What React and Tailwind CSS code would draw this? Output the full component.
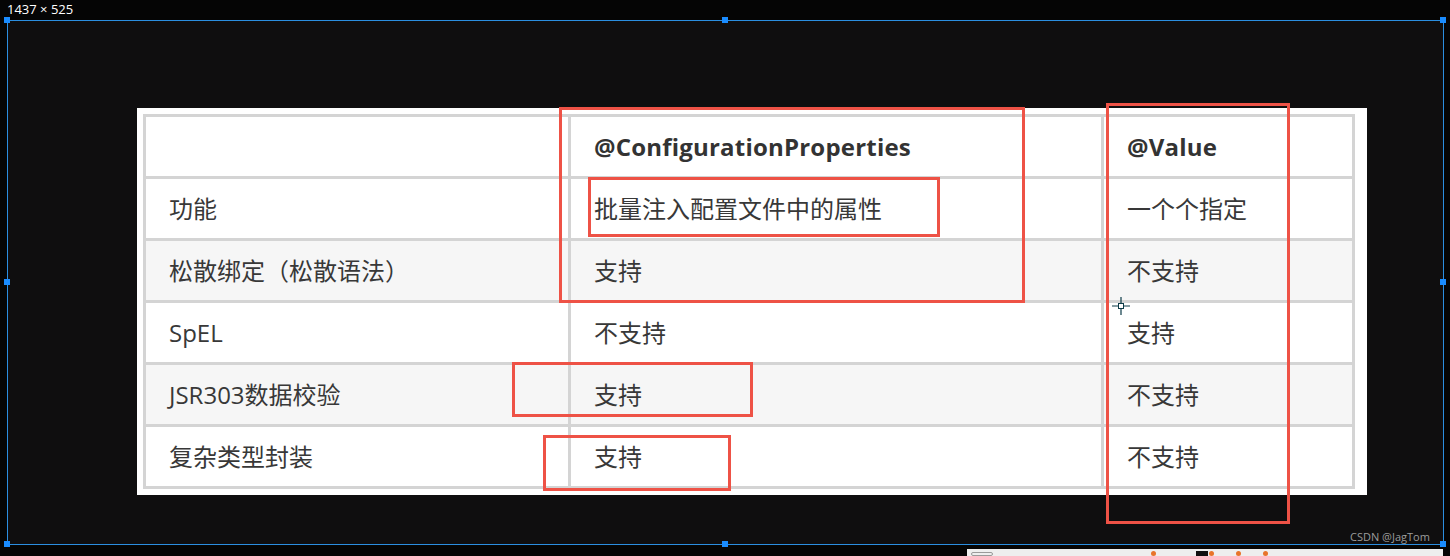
import React from "react";

const rows = [
  ["功能", "批量注入配置文件中的属性", "一个个指定", false],
  ["松散绑定（松散语法）", "支持", "不支持", true],
  ["SpEL", "不支持", "支持", false],
  ["JSR303数据校验", "支持", "不支持", true],
  ["复杂类型封装", "支持", "不支持", false],
];

function Cell({ children, bold, shade }) {
  return (
    <div
      className={`flex items-center pl-[23px] h-[59px] text-[24px] ${
        bold ? "font-bold text-[#333333] tracking-[0.2px]" : "font-normal text-[#383838]"
      } ${shade ? "bg-[#f6f6f6]" : "bg-white"}`}
    >
      {children}
    </div>
  );
}

function Handle({ cls }) {
  return <div className={`absolute w-[6px] h-[6px] bg-[#1a8cff] ${cls}`} />;
}

export default function App() {
  return (
    <div
      className="relative w-[1450px] h-[556px] bg-[#050505] overflow-hidden"
      style={{ fontFamily: '"Open Sans", "Noto Sans CJK SC", sans-serif' }}
    >
      <div className="h-[20px] pl-[7px] pt-[1px] text-[13px] leading-[16px] text-white">
        1437 × 525
      </div>
      <div className="ml-[7px] w-[1437px] h-[525px] border border-[#2b8ee0] bg-[#0f0e0f] pt-[87px] pl-[129px]">
        <div className="w-[1230px] h-[387px] bg-white pt-[6px] pl-[6px]">
          <div className="grid grid-cols-[422px_530px_248px] gap-[3px] p-[3px] w-[1212px] bg-[#d4d4d4]">
            <Cell bold />
            <Cell bold>@ConfigurationProperties</Cell>
            <Cell bold>@Value</Cell>
            {rows.map(([a, b, c, shade]) => (
              <React.Fragment key={a}>
                <Cell shade={shade}>{a}</Cell>
                <Cell shade={shade}>{b}</Cell>
                <Cell shade={shade}>{c}</Cell>
              </React.Fragment>
            ))}
          </div>
        </div>
      </div>

      {/* selection handles */}
      <Handle cls="left-[4px] top-[17px]" />
      <Handle cls="left-[722px] top-[17px]" />
      <Handle cls="left-[1440px] top-[17px]" />
      <Handle cls="left-[4px] top-[279px]" />
      <Handle cls="left-[1440px] top-[279px]" />
      <Handle cls="left-[4px] top-[541px]" />
      <Handle cls="left-[722px] top-[541px]" />
      <Handle cls="left-[1440px] top-[541px]" />

      {/* red annotation boxes */}
      <div className="absolute left-[559px] top-[107px] w-[466px] h-[196px] border-[3px] border-[#ee5246]" />
      <div className="absolute left-[588px] top-[177px] w-[352px] h-[60px] border-[3px] border-[#ee5246]" />
      <div className="absolute left-[1106px] top-[103px] w-[184px] h-[421px] border-[3px] border-[#ee5246]" />
      <div className="absolute left-[512px] top-[362px] w-[241px] h-[55px] border-[3px] border-[#ee5246]" />
      <div className="absolute left-[543px] top-[435px] w-[188px] h-[56px] border-[3px] border-[#ee5246]" />

      {/* crosshair cursor */}
      <svg
        className="absolute left-[1112px] top-[297px]"
        width="18"
        height="18"
        viewBox="0 0 18 18"
      >
        <path d="M9 0V6M9 12V18M0 9H6M12 9H18" stroke="#0d3b48" strokeWidth="1.2" />
        <rect x="6.5" y="6.5" width="5" height="5" fill="none" stroke="#0d3b48" strokeWidth="1" />
      </svg>

      {/* watermark */}
      <div className="absolute left-[1350px] top-[530px] text-[11px] leading-[14px] text-[#9c9c9c]">
        CSDN @JagTom
      </div>

      {/* bottom strip */}
      <div className="absolute left-[967px] top-[549px] w-[476px] h-[7px] bg-[#eeeeee] flex items-start">
        <div className="ml-[4px] mt-[3px] w-[22px] h-[4px] border border-[#9a9a9a] rounded-[2px]" />
        <div className="ml-[158px] mt-[2px] w-[5px] h-[5px] rounded-full bg-[#e8742a]" />
        <div className="ml-[40px] mt-[2px] w-[12px] h-[5px] bg-[#111]" />
        <div className="ml-[1px] mt-[2px] w-[5px] h-[5px] rounded-full bg-[#e8742a]" />
        <div className="ml-[22px] mt-[2px] w-[5px] h-[5px] rounded-full bg-[#e8742a]" />
        <div className="ml-[22px] mt-[2px] w-[5px] h-[5px] rounded-full bg-[#e8742a]" />
      </div>
    </div>
  );
}
